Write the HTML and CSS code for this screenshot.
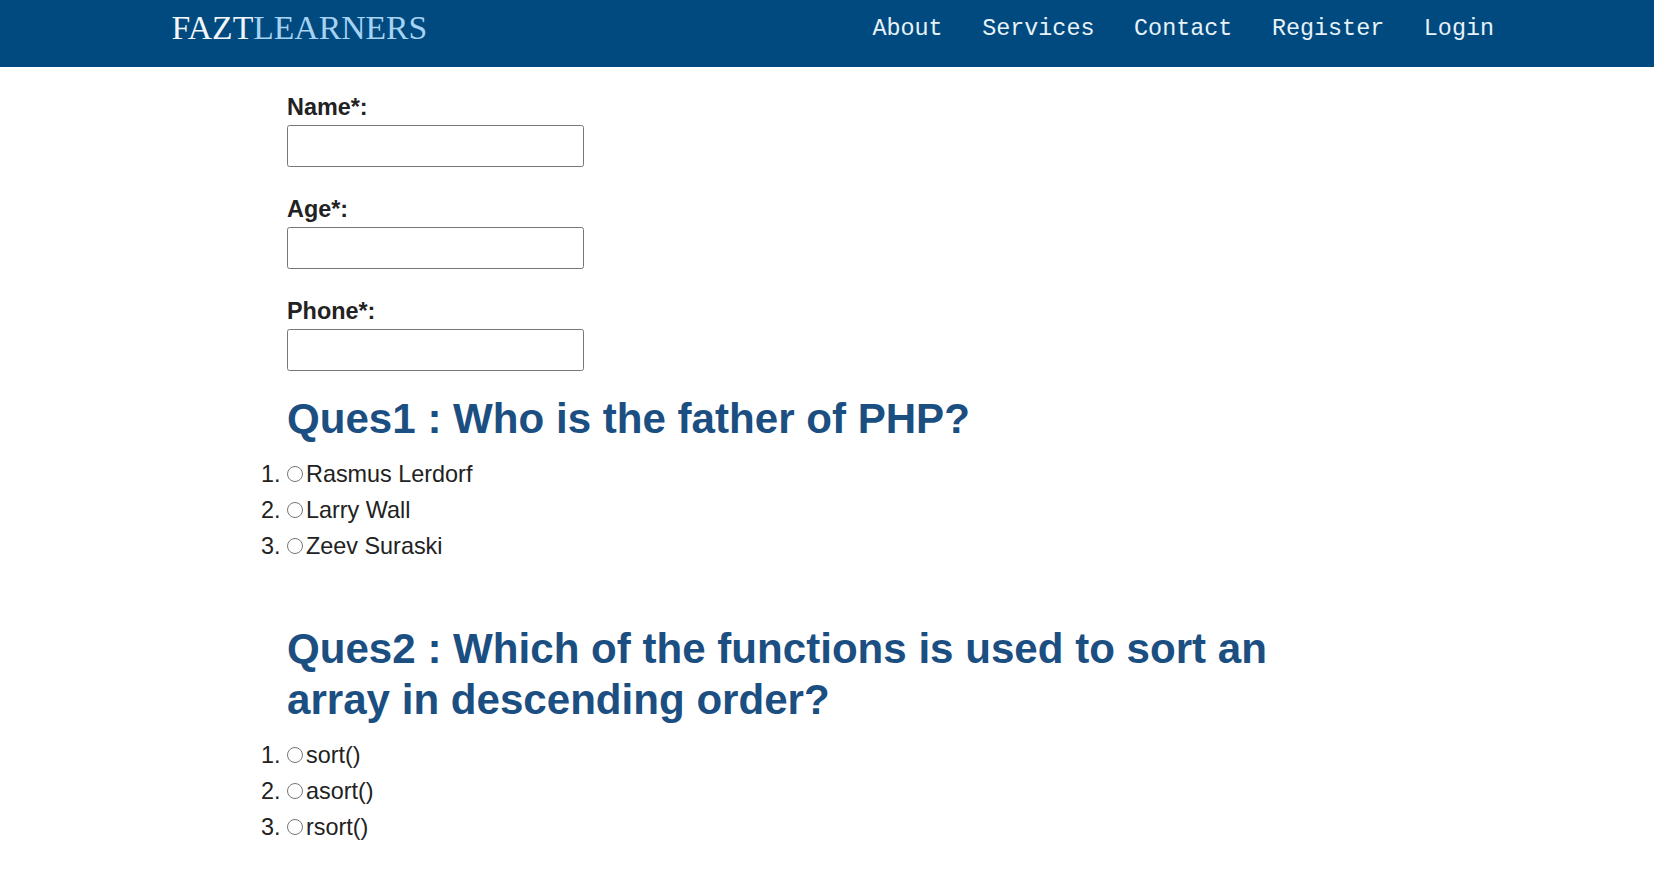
FILE: index.html
```html
<!DOCTYPE html>
<html lang="en">
<head>
<meta charset="utf-8">
<title>FaztLearners Quiz</title>
<link rel="stylesheet" href="styles.css">
</head>
<body>
<header class="navbar">
  <a class="brand" href="#"><span class="brand-light">FAZT</span><span class="brand-accent">LEARNERS</span></a>
  <nav class="nav-links">
    <a href="#">About</a>
    <a href="#">Services</a>
    <a href="#">Contact</a>
    <a href="#">Register</a>
    <a href="#">Login</a>
  </nav>
</header>
<main class="container">
  <form class="quiz">
    <div class="field">
      <label class="field-label" for="name">Name*:</label>
      <input class="field-input" type="text" id="name">
    </div>
    <div class="field">
      <label class="field-label" for="age">Age*:</label>
      <input class="field-input" type="text" id="age">
    </div>
    <div class="field">
      <label class="field-label" for="phone">Phone*:</label>
      <input class="field-input" type="text" id="phone">
    </div>

    <section class="question">
      <h2 class="question-title">Ques1 : Who is the father of PHP?</h2>
      <ol class="options">
        <li><input class="option-radio" type="radio" name="q1">Rasmus Lerdorf</li>
        <li><input class="option-radio" type="radio" name="q1">Larry Wall</li>
        <li><input class="option-radio" type="radio" name="q1">Zeev Suraski</li>
      </ol>
    </section>

    <section class="question">
      <h2 class="question-title">Ques2 : Which of the functions is used to sort an array in descending order?</h2>
      <ol class="options">
        <li><input class="option-radio" type="radio" name="q2">sort()</li>
        <li><input class="option-radio" type="radio" name="q2">asort()</li>
        <li><input class="option-radio" type="radio" name="q2">rsort()</li>
      </ol>
    </section>
  </form>
</main>
</body>
</html>
```

FILE: styles.css
```css
html, body {
  margin: 0;
  padding: 0;
  background: #ffffff;
}

body {
  font-family: "Liberation Sans", Arial, sans-serif;
  font-size: 23.4px;
  color: #222222;
}

.navbar {
  box-sizing: border-box;
  height: 67px;
  background: #004a7f;
  display: flex;
  align-items: flex-start;
  justify-content: space-between;
  padding: 0 160px 0 171.5px;
}

.brand {
  margin-top: 8px;
  font-family: "Liberation Serif", "Times New Roman", serif;
  font-size: 33.7px;
  line-height: 40px;
  text-decoration: none;
}

.brand-light {
  color: #f2f6f9;
}

.brand-accent {
  color: #a6d2f3;
}

.nav-links {
  display: flex;
  gap: 39.6px;
  margin-top: 16.4px;
}

.nav-links a {
  font-family: "Liberation Mono", "Courier New", monospace;
  font-size: 23.4px;
  line-height: 27px;
  color: #e8f2f9;
  text-decoration: none;
}

.container {
  max-width: 1080px;
  margin: 0 auto;
  padding-top: 26.5px;
}

.quiz {
  margin: 0;
  display: flex;
  flex-direction: column;
}

.field {
  margin-bottom: 29px;
}

.field:nth-of-type(3) {
  margin-bottom: 0;
}

.field-label {
  display: block;
  font-weight: bold;
  line-height: 27px;
  margin-bottom: 4.5px;
  color: #222222;
}

.field-input {
  display: block;
  box-sizing: border-box;
  width: 297px;
  height: 41.7px;
  margin: 0;
  border: 1px solid #767676;
  border-radius: 2.5px;
  background: #ffffff;
  font-size: 18px;
}

.question + .question {
  margin-top: 36.7px;
}

.question-title {
  margin: 23.1px 0 0;
  font-size: 42.1px;
  line-height: 50.6px;
  font-weight: bold;
  color: #1b4e81;
}

.options {
  margin: 11.5px 0 0;
  padding: 0;
}

.options li {
  line-height: 36px;
  color: #222222;
}

.option-radio {
  -webkit-appearance: none;
  appearance: none;
  box-sizing: border-box;
  display: inline-block;
  width: 16px;
  height: 16px;
  margin: 0 3px 0 0;
  border: 1.3px solid #767676;
  border-radius: 50%;
  background: #ffffff;
}
```
